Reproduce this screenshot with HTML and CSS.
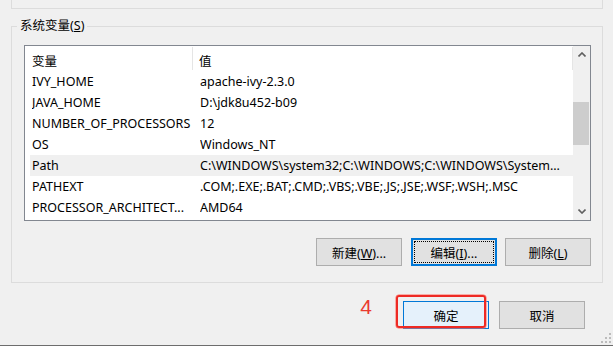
FILE: index.html
```html
<!DOCTYPE html>
<html lang="zh-CN">
<head>
  <meta charset="UTF-8" />
  <title>环境变量</title>
  <link rel="stylesheet" href="styles.css">
</head>
<body>
  <div class="dialog">
    <div class="user-group"></div>

    <fieldset class="group">
      <legend>系统变量(<u>S</u>)</legend>

      <div class="list">
        <div class="list-body">
          <div class="list-head">
            <span class="head-name">变量</span>
            <span class="head-value">值</span>
          </div>
          <div class="row"><span>IVY_HOME</span><span>apache-ivy-2.3.0</span></div>
          <div class="row"><span>JAVA_HOME</span><span>D:\jdk8u452-b09</span></div>
          <div class="row"><span>NUMBER_OF_PROCESSORS</span><span>12</span></div>
          <div class="row"><span>OS</span><span>Windows_NT</span></div>
          <div class="row selected"><span>Path</span><span>C:\WINDOWS\system32;C:\WINDOWS;C:\WINDOWS\System...</span></div>
          <div class="row"><span>PATHEXT</span><span>.COM;.EXE;.BAT;.CMD;.VBS;.VBE;.JS;.JSE;.WSF;.WSH;.MSC</span></div>
          <div class="row"><span>PROCESSOR_ARCHITECT...</span><span>AMD64</span></div>
        </div>
        <div class="scrollbar">
          <div class="arrow">
            <svg viewBox="0 0 8 5" width="8" height="5"><polyline points="0.5,4.5 4,1 7.5,4.5" fill="none" stroke="#606060" stroke-width="1.6"/></svg>
          </div>
          <div class="track"><div class="thumb"></div></div>
          <div class="arrow">
            <svg viewBox="0 0 8 5" width="8" height="5"><polyline points="0.5,0.5 4,4 7.5,0.5" fill="none" stroke="#606060" stroke-width="1.6"/></svg>
          </div>
        </div>
      </div>

      <div class="actions">
        <button class="btn">新建(<u>W</u>)...</button>
        <button class="btn btn-focus">编辑(<u>I</u>)...</button>
        <button class="btn">删除(<u>L</u>)</button>
      </div>
    </fieldset>

    <div class="footer">
      <span class="step">4</span>
      <div class="marked">
        <button class="btn btn-default">确定</button>
        <span class="mark"></span>
      </div>
      <button class="btn">取消</button>
    </div>

    <div class="grip">
      <svg viewBox="0 0 11 11" width="11" height="11">
        <rect x="8" y="0" width="2" height="2" fill="#bcbcbc"/>
        <rect x="4" y="4" width="2" height="2" fill="#bcbcbc"/>
        <rect x="8" y="4" width="2" height="2" fill="#bcbcbc"/>
        <rect x="0" y="8" width="2" height="2" fill="#bcbcbc"/>
        <rect x="4" y="8" width="2" height="2" fill="#bcbcbc"/>
        <rect x="8" y="8" width="2" height="2" fill="#bcbcbc"/>
      </svg>
    </div>
  </div>
</body>
</html>
```

FILE: styles.css
```css
* {
  box-sizing: border-box;
}
body, html {
  margin: 0;
  padding: 0;
  background-color: #f0f0f0;
  font-family: "Noto Sans", "Noto Sans CJK SC", sans-serif;
  font-size: 12.5px;
  color: #000;
}
.dialog {
  position: relative;
  width: 613px;
  height: 346px;
  border-bottom: 1px solid #6d6d6d;
  overflow: hidden;
}
u {
  text-decoration: underline;
  text-underline-offset: 1px;
}
.user-group {
  height: 9px;
  margin: 0 10px 0 11px;
  border: 1px solid #dcdcdc;
  border-top: none;
}
.group {
  margin: 9px 10px 0 11px;
  padding: 0 11px 16px 12px;
  border: 1px solid #dcdcdc;
  min-width: 0;
}
.group legend {
  margin-left: -7px;
  padding: 0 3px;
  line-height: 16px;
}
.list {
  display: flex;
  height: 176px;
  margin-top: 11px;
  border: 1px solid #828790;
  background-color: #fff;
}
.list-body {
  flex: 1;
  padding-left: 5px;
  overflow: hidden;
}
.list-head {
  display: flex;
  height: 25px;
  align-items: stretch;
}
.head-name {
  width: 163px;
  padding: 4px 0 0 2px;
  border-right: 1px solid #e5e5e5;
  margin: 1px 0 1px 0;
}
.head-value {
  flex: 1;
  padding: 4px 0 0 6px;
  border-right: 1px solid #e5e5e5;
  margin: 1px 0 1px 0;
}
.row {
  display: grid;
  grid-template-columns: 168px 1fr;
  height: 21px;
  line-height: 21px;
  padding-left: 2px;
  white-space: nowrap;
}
.row span {
  overflow: hidden;
}
.row.selected {
  background-color: #f0f0f0;
}
.scrollbar {
  width: 17px;
  display: flex;
  flex-direction: column;
  background-color: #f0f0f0;
}
.arrow {
  height: 17px;
  display: flex;
  align-items: center;
  justify-content: center;
}
.arrow svg {
  display: block;
}
.track {
  flex: 1;
}
.thumb {
  margin: 39px 1px 0 0;
  height: 43px;
  background-color: #cdcdcd;
}
.actions {
  display: flex;
  justify-content: flex-end;
  gap: 8px;
  margin-top: 17px;
}
.btn {
  width: 86px;
  height: 28px;
  padding: 0;
  border: 1px solid #adadad;
  background-color: #e1e1e1;
  font-family: inherit;
  font-size: 12.5px;
  color: #000;
}
.actions .btn:first-child {
  margin-right: 1px;
}
.btn-focus {
  border-color: #0078d7;
  box-shadow: inset 0 0 0 1px #0078d7;
  outline: 1px dotted #000;
  outline-offset: -4px;
}
.btn-default {
  display: block;
  border-color: #0078d7;
  background-color: #e5f1fb;
}
.footer {
  display: flex;
  justify-content: flex-end;
  align-items: flex-start;
  gap: 10px;
  margin-top: 18px;
  padding-right: 28px;
}
.step {
  margin-right: 21px;
  margin-top: -6px;
  font-family: "Liberation Sans", sans-serif;
  font-size: 21px;
  line-height: 24px;
  color: #ea3b30;
}
.marked {
  position: relative;
}
.mark {
  position: absolute;
  left: -7px;
  top: -6px;
  width: 90px;
  height: 33px;
  border: 2px solid #ee2a24;
  border-radius: 3px;
  box-shadow: 0 0 0 0.5px #ff6a5f;
}
.grip {
  position: absolute;
  right: 1px;
  bottom: 1px;
  line-height: 0;
}
```
